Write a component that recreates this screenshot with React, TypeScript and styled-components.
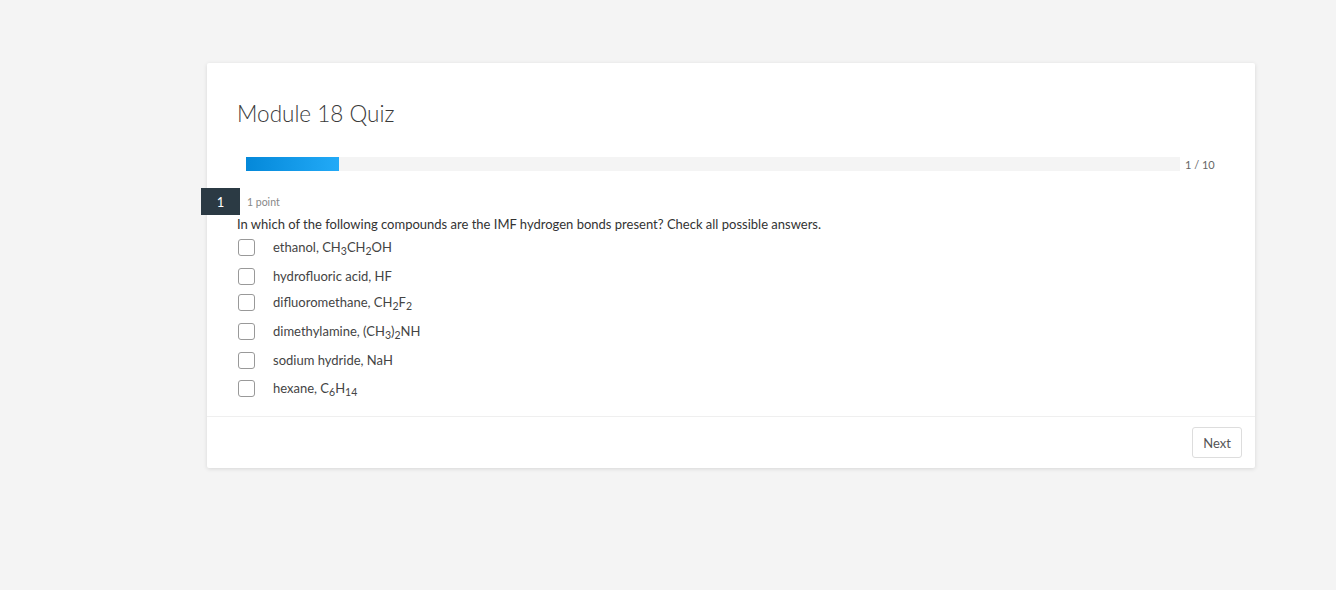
import { createGlobalStyle } from "styled-components";
import styled from "styled-components";

const GlobalStyle = createGlobalStyle`
    body {
        margin: 0;
        background: #f4f4f4;
        font-family: Lato, "Open Sans", sans-serif;
        color: #333;
    }
`;

const Page = styled.div`
    min-height: 590px;
    padding: 63px 81px 0 207px;
    box-sizing: border-box;
`;

const Card = styled.div`
    width: 1048px;
    background: #fff;
    border-radius: 2px;
    box-shadow: 0 1px 4px rgba(0, 0, 0, 0.12);
`;

const Body = styled.div`
    padding: 37px 40px 19px 30px;
`;

const Title = styled.h1`
    margin: 0;
    font-size: 22.5px;
    line-height: 27px;
    font-weight: 300;
    color: #3a3a3a;
`;

const ProgressRow = styled.div`
    display: flex;
    align-items: center;
    gap: 5px;
    margin: 30px 0 0 9px;
`;

const Track = styled.div`
    flex: 1;
    height: 14px;
    background: #f4f4f4;
`;

const Fill = styled.div`
    height: 100%;
    background: linear-gradient(to right, #0488d9, #22aaf7);
`;

const Count = styled.span`
    font-size: 11px;
    color: #666;
    width: 30px;
`;

const Question = styled.div`
    position: relative;
    margin-top: 17px;
`;

const Badge = styled.div`
    position: absolute;
    left: -36px;
    top: 0;
    width: 39px;
    height: 27px;
    background: #2b3a44;
    color: #fff;
    font-size: 13px;
    display: flex;
    align-items: center;
    justify-content: center;
`;

const Points = styled.div`
    padding-left: 10px;
    height: 27px;
    line-height: 28px;
    font-size: 10.5px;
    color: #888;
`;

const Prompt = styled.p`
    margin: 0;
    font-size: 13px;
    line-height: 18px;
    color: #333;
`;

const Options = styled.ul`
    list-style: none;
    margin: 5px 0 0;
    padding: 0 0 0 1px;
`;

const Option = styled.li<{ $gap: number }>`
    display: flex;
    align-items: center;
    gap: 18px;
    margin-bottom: ${(p) => p.$gap}px;
    font-size: 13px;
    line-height: 18px;
    color: #444;
`;

const Box = styled.span`
    width: 15px;
    height: 15px;
    border: 1px solid #999;
    border-radius: 3px;
    flex-shrink: 0;
`;

const Sub = styled.sub`
    font-size: 10.5px;
    line-height: 0;
    vertical-align: -3px;
`;

const Footer = styled.div`
    border-top: 1px solid #efefef;
    display: flex;
    justify-content: flex-end;
    padding: 10px 13px;
`;

const Button = styled.button`
    width: 50px;
    height: 31px;
    background: #fff;
    border: 1px solid #ddd;
    border-radius: 3px;
    font-family: Lato, "Open Sans", sans-serif;
    font-size: 13px;
    color: #555;
`;

const options: [React.ReactNode, number][] = [
    [<>ethanol, CH<Sub>3</Sub>CH<Sub>2</Sub>OH</>, 11],
    [<>hydrofluoric acid, HF</>, 8],
    [<>difluoromethane, CH<Sub>2</Sub>F<Sub>2</Sub></>, 11],
    [<>dimethylamine, (CH<Sub>3</Sub>)<Sub>2</Sub>NH</>, 11],
    [<>sodium hydride, NaH</>, 10],
    [<>hexane, C<Sub>6</Sub>H<Sub>14</Sub></>, 0],
];

export default function App() {
    return (
        <Page>
            <GlobalStyle />
            <Card>
                <Body>
                    <Title>Module 18 Quiz</Title>
                    <ProgressRow>
                        <Track>
                            <Fill style={{ width: "10%" }} />
                        </Track>
                        <Count>1 / 10</Count>
                    </ProgressRow>
                    <Question>
                        <Badge>1</Badge>
                        <Points>1 point</Points>
                        <Prompt>
                            In which of the following compounds are the IMF hydrogen bonds present? Check all possible answers.
                        </Prompt>
                        <Options>
                            {options.map(([label, gap], i) => (
                                <Option key={i} $gap={gap}>
                                    <Box />
                                    <span>{label}</span>
                                </Option>
                            ))}
                        </Options>
                    </Question>
                </Body>
                <Footer>
                    <Button>Next</Button>
                </Footer>
            </Card>
        </Page>
    );
}
